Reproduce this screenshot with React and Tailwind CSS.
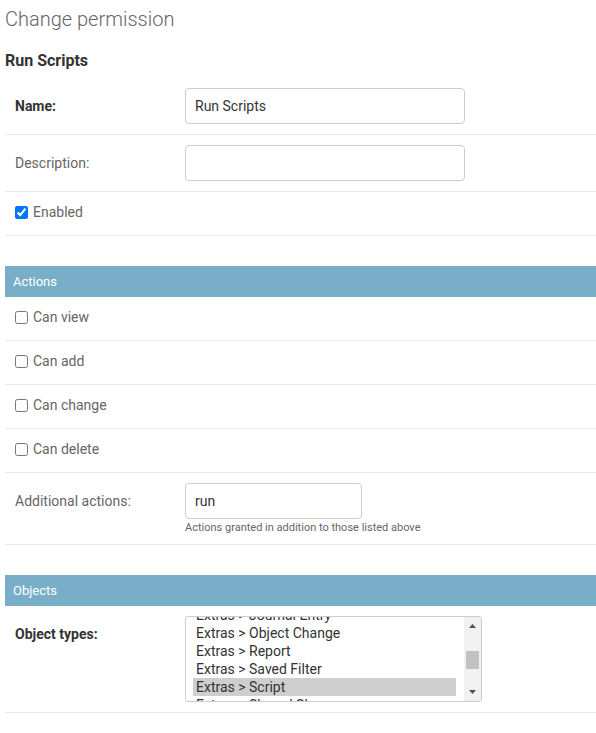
import React from "react";

const font = { fontFamily: "Roboto, 'Liberation Sans', sans-serif" };

function Row({ children, className = "" }) {
  return (
    <div className={"flex border-b border-[#e8e8e8] px-[10px] " + className}>
      {children}
    </div>
  );
}

function Check({ label, checked }) {
  return (
    <Row className="pt-[9px] pb-[11px]">
      <div className="flex h-[23px] items-center">
        <input
          type="checkbox"
          defaultChecked={checked}
          className="m-0 h-[13px] w-[13px]"
        />
        <span className="ml-[5px] text-[14px] text-[#666]">{label}</span>
      </div>
    </Row>
  );
}

function Header({ title }) {
  return (
    <div className="bg-[#79aec8] px-[8px] h-[31px] flex items-center text-[13px] text-white">
      {title}
    </div>
  );
}

const options = [
  "Extras > Journal Entry",
  "Extras > Object Change",
  "Extras > Report",
  "Extras > Saved Filter",
  "Extras > Script",
  "Extras > Shared Show",
];

export default function App() {
  return (
    <div className="w-[596px] h-[733px] overflow-hidden bg-white pl-[5px]" style={font}>
      <div className="pt-[7px]">
        <h1 className="text-[20px] leading-[24px] font-light text-[#666]">Change permission</h1>
        <h2 className="mt-[20px] text-[16px] leading-[20px] font-bold text-[#333]">Run Scripts</h2>
      </div>

      <div className="mt-[7px]">
        <Row className="py-[10px] items-center">
          <label className="w-[170px] shrink-0 text-[14px] font-bold text-[#333]">Name:</label>
          <div className="w-[280px] h-[36px] border border-[#ccc] rounded-[4px] px-[9px] flex items-center text-[14px] text-[#333]">
            Run Scripts
          </div>
        </Row>
        <Row className="py-[10px] items-center">
          <label className="w-[170px] shrink-0 text-[14px] text-[#666]">Description:</label>
          <div className="w-[280px] h-[36px] border border-[#ccc] rounded-[4px]" />
        </Row>
        <Check label="Enabled" checked />
      </div>

      <div className="mt-[30px]">
        <Header title="Actions" />
        <Check label="Can view" />
        <Check label="Can add" />
        <Check label="Can change" />
        <Check label="Can delete" />
        <Row className="pt-[10px] pb-[10px] items-start">
          <label className="w-[170px] shrink-0 h-[36px] flex items-center text-[14px] text-[#666]">
            Additional actions:
          </label>
          <div>
            <div className="w-[177px] h-[36px] border border-[#ccc] rounded-[4px] px-[9px] flex items-center text-[14px] text-[#333]">
              run
            </div>
            <div className="mt-[2px] text-[11px] leading-[13px] text-[#666]">
              Actions granted in addition to those listed above
            </div>
          </div>
        </Row>
      </div>

      <div className="mt-[30px]">
        <Header title="Objects" />
        <Row className="py-[10px] items-start">
          <label className="w-[170px] shrink-0 mt-[9px] leading-[18px] text-[14px] font-bold text-[#333]">
            Object types:
          </label>
          <div className="w-[297px] h-[86px] border border-[#ccc] rounded-[3px] overflow-hidden flex">
            <div className="flex-1 overflow-hidden pl-[7px] pr-[8px]">
              <div className="-mt-[11px]">
                {options.map((o, i) => (
                  <div
                    key={o}
                    className={
                      "h-[18px] leading-[18px] px-[3px] text-[14px] text-[#333] whitespace-nowrap " +
                      (i === 4 ? "bg-[#cecece]" : "")
                    }
                  >
                    {o}
                  </div>
                ))}
              </div>
            </div>
            <div className="w-[17px] bg-[#f1f1f1] flex flex-col items-center">
              <svg width="17" height="17" viewBox="0 0 17 17" className="shrink-0">
                <path d="M5 11 L8.5 7 L12 11 Z" fill="#505050" />
              </svg>
              <div className="mt-[17px] w-[13px] h-[18px] bg-[#c1c1c1]" />
              <div className="flex-1" />
              <svg width="17" height="17" viewBox="0 0 17 17" className="shrink-0">
                <path d="M5 6 L8.5 10 L12 6 Z" fill="#505050" />
              </svg>
            </div>
          </div>
        </Row>
      </div>
    </div>
  );
}
